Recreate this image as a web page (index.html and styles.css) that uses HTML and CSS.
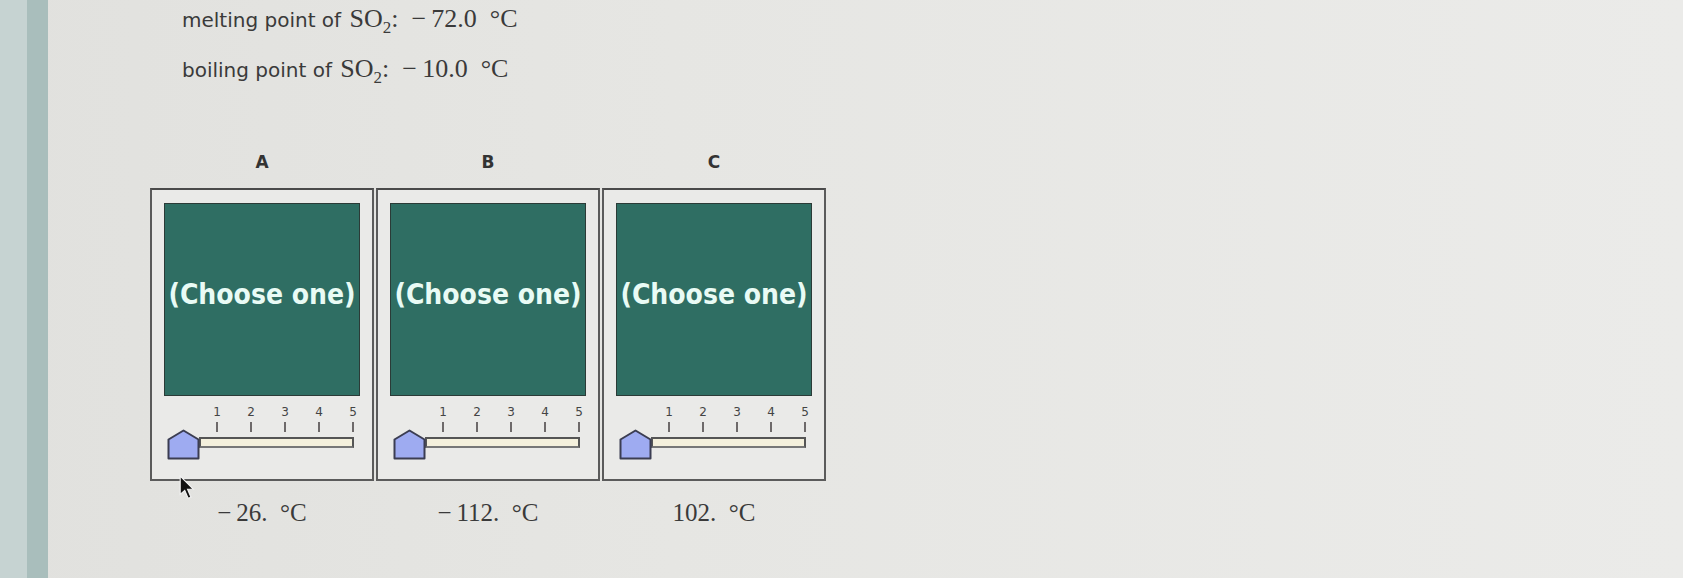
FILE: index.html
```html
<!DOCTYPE html>
<html lang="en">
<head>
  <meta charset="UTF-8">
  <meta name="viewport" content="width=device-width, initial-scale=1">
  <title>Phases of SO2</title>
<link rel="stylesheet" href="styles.css">
</head>
<body>
  <div class="screen">
    <div class="rail"><div class="rail-light"></div><div class="rail-dark"></div></div>
    <main class="content">
      <div class="facts">
        <p class="fact">melting point of <span class="math">SO<sub>2</sub>:&ensp;&minus;&thinsp;72.0&ensp;°C</span></p>
        <p class="fact fact-boil">boiling point of <span class="math">SO<sub>2</sub>:&ensp;&minus;&thinsp;10.0&ensp;°C</span></p>
      </div>

      <div class="samples">
        <div class="sample">
          <div class="sample-label">A</div>
          <div class="panel">
            <div class="choice">(Choose one)</div>
            <div class="slider">
              <div class="scale"><span>1</span><span>2</span><span>3</span><span>4</span><span>5</span></div>
              <div class="ticks"><i></i><i></i><i></i><i></i><i></i></div>
              <div class="slide-row">
                <svg class="thumb" viewBox="0 0 33 31" width="33" height="31"><path d="M16.5 1.5 L31.5 10.5 L31.5 29.5 L1.5 29.5 L1.5 10.5 Z"/></svg>
                <div class="track"></div>
              </div>
            </div>
            <svg class="pointer" viewBox="0 0 14 22" width="16" height="25"><path d="M1 1 L1 17 L5 13.5 L8 20.5 L10.5 19.5 L7.5 12.5 L12.5 12.5 Z"/></svg>
          </div>
          <div class="reading">&minus;&thinsp;26.&ensp;°C</div>
        </div>

        <div class="sample">
          <div class="sample-label">B</div>
          <div class="panel">
            <div class="choice">(Choose one)</div>
            <div class="slider">
              <div class="scale"><span>1</span><span>2</span><span>3</span><span>4</span><span>5</span></div>
              <div class="ticks"><i></i><i></i><i></i><i></i><i></i></div>
              <div class="slide-row">
                <svg class="thumb" viewBox="0 0 33 31" width="33" height="31"><path d="M16.5 1.5 L31.5 10.5 L31.5 29.5 L1.5 29.5 L1.5 10.5 Z"/></svg>
                <div class="track"></div>
              </div>
            </div>
          </div>
          <div class="reading">&minus;&thinsp;112.&ensp;°C</div>
        </div>

        <div class="sample">
          <div class="sample-label">C</div>
          <div class="panel">
            <div class="choice">(Choose one)</div>
            <div class="slider">
              <div class="scale"><span>1</span><span>2</span><span>3</span><span>4</span><span>5</span></div>
              <div class="ticks"><i></i><i></i><i></i><i></i><i></i></div>
              <div class="slide-row">
                <svg class="thumb" viewBox="0 0 33 31" width="33" height="31"><path d="M16.5 1.5 L31.5 10.5 L31.5 29.5 L1.5 29.5 L1.5 10.5 Z"/></svg>
                <div class="track"></div>
              </div>
            </div>
          </div>
          <div class="reading">102.&ensp;°C</div>
        </div>
      </div>
    </main>
  </div>
</body>
</html>
```

FILE: styles.css
```css
html, body {
  height: 100%;
}
body {
  margin: 0;
  background: #e4e4e1;
  background: linear-gradient(90deg, #e1e1de 0%, #e6e6e3 40%, #ebebe9 100%);
  color: #3a3a3a;
  font-family: "DejaVu Sans", Verdana, sans-serif;
}
.screen {
  display: flex;
  height: 100%;
}

/* left window edge */
.rail {
  display: flex;
  flex: none;
}
.rail-light {
  width: 27px;
  background: #c6d3d2;
}
.rail-dark {
  width: 21px;
  background: #a9bebc;
}

.content {
  flex: 1;
}

/* melting / boiling lines */
.facts {
  padding-left: 134px;
}
.fact {
  margin: 0;
  font-size: 20px;
  line-height: 38px;
  height: 38px;
}
.fact-boil {
  margin-top: 12px;
}
.math {
  font-family: "Liberation Serif", "Times New Roman", serif;
  font-size: 26px;
  margin-left: 2px;
}
.math sub {
  font-size: 17px;
  line-height: 0;
  vertical-align: -6px;
}

/* three sample columns */
.samples {
  display: flex;
  gap: 2px;
  margin-left: 102px;
  margin-top: 64px;
}
.sample {
  width: 224px;
  text-align: center;
}
.sample-label {
  font-size: 17px;
  font-weight: bold;
  line-height: 20px;
  color: #333;
  margin-bottom: 16px;
}
.panel {
  position: relative;
  border: 2px solid #5b5b5b;
  border-top-color: #4a4a4a;
  background: #eaeae8;
  padding: 13px 12px 19px 12px;
  text-align: left;
}
.choice {
  height: 193px;
  box-sizing: border-box;
  border: 1px solid #2b3b37;
  background: #2f6e63;
  color: #e9fbf5;
  font-family: "DejaVu Sans Condensed", "DejaVu Sans", sans-serif;
  font-stretch: condensed;
  font-weight: bold;
  font-size: 28px;
  display: flex;
  align-items: center;
  justify-content: center;
  padding-bottom: 10px;
  white-space: nowrap;
}

/* slider under each answer */
.slider {
  margin-top: 10px;
}
.scale, .ticks {
  display: grid;
  grid-template-columns: repeat(5, 34px);
  padding-left: 36px;
  justify-items: center;
}
.scale span {
  font-size: 12px;
  line-height: 12px;
  color: #444;
}
.ticks {
  margin-top: 4px;
  height: 10px;
}
.ticks i {
  width: 2px;
  height: 10px;
  background: #6e6a6a;
}
.slide-row {
  display: flex;
  align-items: flex-start;
  margin-top: -3px;
}
.thumb {
  display: block;
  margin-left: 3px;
  position: relative;
  z-index: 1;
}
.thumb path {
  fill: #9eabf1;
  stroke: #3b3d52;
  stroke-width: 2;
  stroke-linejoin: round;
}
.track {
  width: 155px;
  height: 11px;
  box-sizing: border-box;
  margin-left: -1px;
  margin-top: 8px;
  background: #f4f0dc;
  border: 2px solid #555;
  border-bottom-color: #777;
}

.pointer {
  position: absolute;
  left: 27px;
  top: 285px;
}
.pointer path {
  fill: #111;
  stroke: #f2f2f2;
  stroke-width: 1;
}

.reading {
  margin-top: 17px;
  font-family: "Liberation Serif", "Times New Roman", serif;
  font-size: 25px;
  line-height: 30px;
  color: #3a3a3a;
}
```
